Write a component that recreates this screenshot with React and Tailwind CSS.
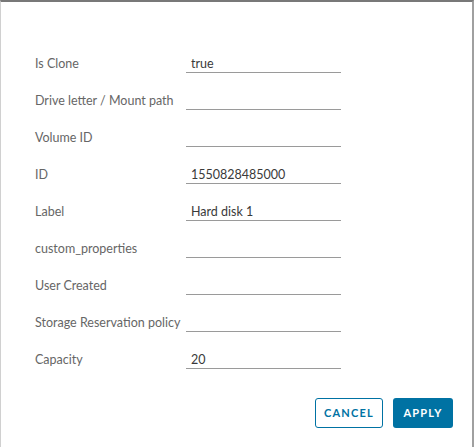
const rows = [
  { label: 'Is Clone', value: 'true' },
  { label: 'Drive letter / Mount path', value: '' },
  { label: 'Volume ID', value: '' },
  { label: 'ID', value: '1550828485000' },
  { label: 'Label', value: 'Hard disk 1' },
  { label: 'custom_properties', value: '' },
  { label: 'User Created', value: '' },
  { label: 'Storage Reservation policy', value: '' },
  { label: 'Capacity', value: '20' },
];

export default function App() {
  return (
    <div
      className="w-[474px] h-[447px] bg-white border-t-2 border-t-[#787878] border-l border-l-[#d0d0d0] border-r-2 border-r-[#a0a0a0] overflow-hidden"
      style={{ fontFamily: 'Lato, "Open Sans", sans-serif' }}
    >
      {/* Form rows */}
      <div className="pt-[34px] pl-[34px]">
        {rows.map((row) => (
          <div key={row.label} className="flex items-end h-[37px]">
            <div className="w-[151px] text-[12.5px] leading-[18px] text-[#666] whitespace-nowrap">
              {row.label}
            </div>
            <div className="w-[155px] h-[18px] border-b border-[#9a9a9a] pl-[5px] text-[12.5px] leading-[17px] text-[#3a3a3a]">
              {row.value}
            </div>
          </div>
        ))}
      </div>

      {/* Actions */}
      <div className="flex justify-end gap-[10px] pr-[19px] mt-[29px]">
        <button className="h-[30px] w-[68px] rounded-[3px] border border-[#0072a3] bg-white text-[#0072a3] text-[11px] font-bold tracking-[1.2px]">
          CANCEL
        </button>
        <button className="h-[30px] w-[60px] rounded-[3px] bg-[#0072a3] text-white text-[11px] font-bold tracking-[1.2px]">
          APPLY
        </button>
      </div>
    </div>
  );
}
